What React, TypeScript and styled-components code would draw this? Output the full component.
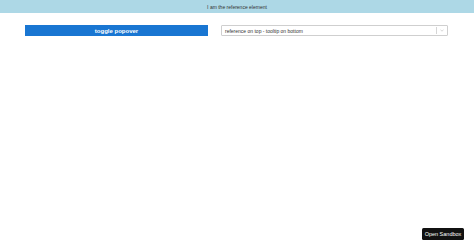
import React from "react";
import styled, { createGlobalStyle } from "styled-components";

const Global = createGlobalStyle`
  html, body { margin: 0; padding: 0; background: #fff; }
  body { font-family: "Liberation Sans", Arial, sans-serif; width: 474px; height: 248px; overflow: hidden; }
`;

const Banner = styled.div`
  height: 13px;
  background: #add8e6;
  display: flex;
  align-items: center;
  justify-content: center;
  font-size: 5px;
  color: #333;
`;

const Row = styled.div`
  display: grid;
  grid-template-columns: 183px 227px;
  column-gap: 13px;
  padding: 12px 0 0 25px;
`;

const Button = styled.button`
  height: 11px;
  margin: 0;
  padding: 0;
  border: none;
  background: #1976d2;
  color: #fff;
  font-family: "Liberation Sans", Arial, sans-serif;
  font-weight: bold;
  font-size: 6px;
  display: flex;
  align-items: center;
  justify-content: center;
`;

const Select = styled.div`
  height: 11px;
  box-sizing: border-box;
  border: 1px solid #cfcfcf;
  border-radius: 1px;
  display: flex;
  align-items: center;
  font-size: 5px;
  color: #333;
`;

const Value = styled.div`
  flex: 1;
  padding-left: 3px;
  white-space: nowrap;
`;

const Indicator = styled.div`
  width: 10px;
  height: 7px;
  border-left: 1px solid #d6d6d6;
  display: flex;
  align-items: center;
  justify-content: center;
`;

const Sandbox = styled.div`
  position: fixed;
  right: 10px;
  bottom: 8px;
  width: 42px;
  height: 12px;
  background: #111;
  border-radius: 1.5px;
  color: #fff;
  font-size: 5.5px;
  display: flex;
  align-items: center;
  justify-content: center;
`;

export default function App() {
  return (
    <>
      <Global />
      <Banner>I am the reference element</Banner>
      <Row>
        <Button>toggle popover</Button>
        <Select>
          <Value>reference on top - tooltip on bottom</Value>
          <Indicator>
            <svg width="4" height="3" viewBox="0 0 4 3">
              <path d="M0.5 0.8 L2 2.2 L3.5 0.8" stroke="#bbb" strokeWidth="0.6" fill="none" />
            </svg>
          </Indicator>
        </Select>
      </Row>
      <Sandbox>Open Sandbox</Sandbox>
    </>
  );
}
